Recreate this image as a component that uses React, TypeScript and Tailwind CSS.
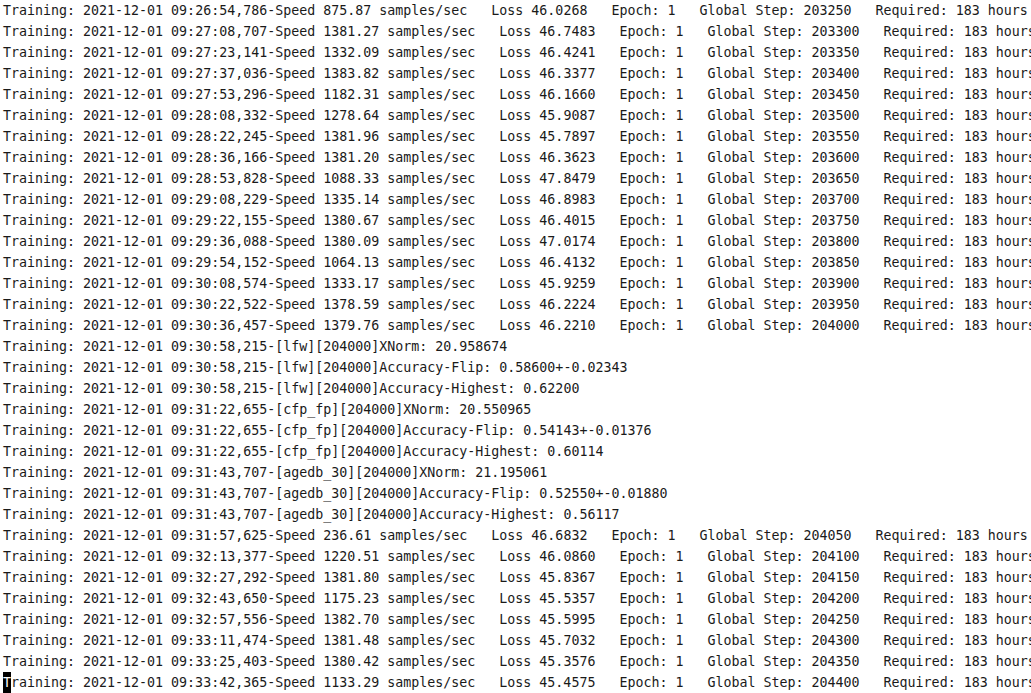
const lines: string[] = [
  "Training: 2021-12-01 09:26:54,786-Speed 875.87 samples/sec   Loss 46.0268   Epoch: 1   Global Step: 203250   Required: 183 hours",
  "Training: 2021-12-01 09:27:08,707-Speed 1381.27 samples/sec   Loss 46.7483   Epoch: 1   Global Step: 203300   Required: 183 hours",
  "Training: 2021-12-01 09:27:23,141-Speed 1332.09 samples/sec   Loss 46.4241   Epoch: 1   Global Step: 203350   Required: 183 hours",
  "Training: 2021-12-01 09:27:37,036-Speed 1383.82 samples/sec   Loss 46.3377   Epoch: 1   Global Step: 203400   Required: 183 hours",
  "Training: 2021-12-01 09:27:53,296-Speed 1182.31 samples/sec   Loss 46.1660   Epoch: 1   Global Step: 203450   Required: 183 hours",
  "Training: 2021-12-01 09:28:08,332-Speed 1278.64 samples/sec   Loss 45.9087   Epoch: 1   Global Step: 203500   Required: 183 hours",
  "Training: 2021-12-01 09:28:22,245-Speed 1381.96 samples/sec   Loss 45.7897   Epoch: 1   Global Step: 203550   Required: 183 hours",
  "Training: 2021-12-01 09:28:36,166-Speed 1381.20 samples/sec   Loss 46.3623   Epoch: 1   Global Step: 203600   Required: 183 hours",
  "Training: 2021-12-01 09:28:53,828-Speed 1088.33 samples/sec   Loss 47.8479   Epoch: 1   Global Step: 203650   Required: 183 hours",
  "Training: 2021-12-01 09:29:08,229-Speed 1335.14 samples/sec   Loss 46.8983   Epoch: 1   Global Step: 203700   Required: 183 hours",
  "Training: 2021-12-01 09:29:22,155-Speed 1380.67 samples/sec   Loss 46.4015   Epoch: 1   Global Step: 203750   Required: 183 hours",
  "Training: 2021-12-01 09:29:36,088-Speed 1380.09 samples/sec   Loss 47.0174   Epoch: 1   Global Step: 203800   Required: 183 hours",
  "Training: 2021-12-01 09:29:54,152-Speed 1064.13 samples/sec   Loss 46.4132   Epoch: 1   Global Step: 203850   Required: 183 hours",
  "Training: 2021-12-01 09:30:08,574-Speed 1333.17 samples/sec   Loss 45.9259   Epoch: 1   Global Step: 203900   Required: 183 hours",
  "Training: 2021-12-01 09:30:22,522-Speed 1378.59 samples/sec   Loss 46.2224   Epoch: 1   Global Step: 203950   Required: 183 hours",
  "Training: 2021-12-01 09:30:36,457-Speed 1379.76 samples/sec   Loss 46.2210   Epoch: 1   Global Step: 204000   Required: 183 hours",
  "Training: 2021-12-01 09:30:58,215-[lfw][204000]XNorm: 20.958674",
  "Training: 2021-12-01 09:30:58,215-[lfw][204000]Accuracy-Flip: 0.58600+-0.02343",
  "Training: 2021-12-01 09:30:58,215-[lfw][204000]Accuracy-Highest: 0.62200",
  "Training: 2021-12-01 09:31:22,655-[cfp_fp][204000]XNorm: 20.550965",
  "Training: 2021-12-01 09:31:22,655-[cfp_fp][204000]Accuracy-Flip: 0.54143+-0.01376",
  "Training: 2021-12-01 09:31:22,655-[cfp_fp][204000]Accuracy-Highest: 0.60114",
  "Training: 2021-12-01 09:31:43,707-[agedb_30][204000]XNorm: 21.195061",
  "Training: 2021-12-01 09:31:43,707-[agedb_30][204000]Accuracy-Flip: 0.52550+-0.01880",
  "Training: 2021-12-01 09:31:43,707-[agedb_30][204000]Accuracy-Highest: 0.56117",
  "Training: 2021-12-01 09:31:57,625-Speed 236.61 samples/sec   Loss 46.6832   Epoch: 1   Global Step: 204050   Required: 183 hours",
  "Training: 2021-12-01 09:32:13,377-Speed 1220.51 samples/sec   Loss 46.0860   Epoch: 1   Global Step: 204100   Required: 183 hours",
  "Training: 2021-12-01 09:32:27,292-Speed 1381.80 samples/sec   Loss 45.8367   Epoch: 1   Global Step: 204150   Required: 183 hours",
  "Training: 2021-12-01 09:32:43,650-Speed 1175.23 samples/sec   Loss 45.5357   Epoch: 1   Global Step: 204200   Required: 183 hours",
  "Training: 2021-12-01 09:32:57,556-Speed 1382.70 samples/sec   Loss 45.5995   Epoch: 1   Global Step: 204250   Required: 183 hours",
  "Training: 2021-12-01 09:33:11,474-Speed 1381.48 samples/sec   Loss 45.7032   Epoch: 1   Global Step: 204300   Required: 183 hours",
  "Training: 2021-12-01 09:33:25,403-Speed 1380.42 samples/sec   Loss 45.3576   Epoch: 1   Global Step: 204350   Required: 183 hours",
  "Training: 2021-12-01 09:33:42,365-Speed 1133.29 samples/sec   Loss 45.4575   Epoch: 1   Global Step: 204400   Required: 183 hours",
];

export default function App() {
  return (
    <div className="w-[1031px] h-[693px] overflow-hidden bg-white pl-[3px] text-[#1a1a1a] font-['DejaVu_Sans_Mono',monospace] text-[13.3px] leading-[21px]">
      {lines.map((l, i) => (
        <div key={i} className="whitespace-pre h-[21px]">
          {i === lines.length - 1 ? (
            <>
              <span className="inline-block h-[21px] w-[8px] align-top bg-black text-white">{l[0]}</span>
              {l.slice(1)}
            </>
          ) : (
            l
          )}
        </div>
      ))}
    </div>
  );
}
